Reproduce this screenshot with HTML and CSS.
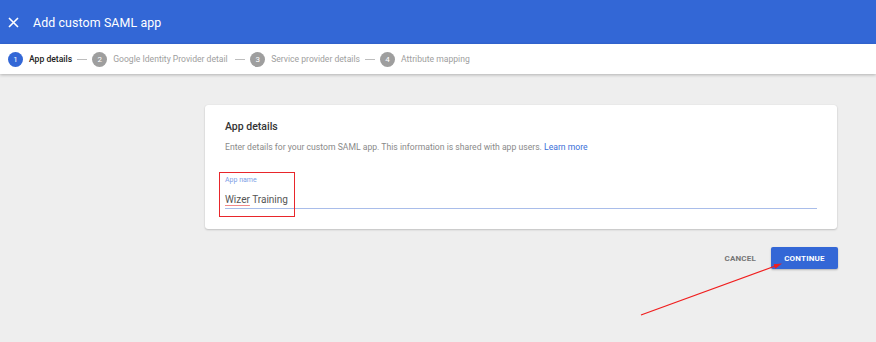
FILE: index.html
```html
<!DOCTYPE html>
<html lang="en">
<head>
  <meta charset="UTF-8">
  <title>Add custom SAML app</title>
  <link rel="stylesheet" href="styles.css">
</head>
<body>
  <header class="appbar">
    <button class="close-btn" aria-label="Close">
      <svg width="11" height="11" viewBox="0 0 11 11"><path d="M1 1L10 10M10 1L1 10" stroke="#fff" stroke-width="1.6" fill="none"/></svg>
    </button>
    <h1 class="appbar-title">Add custom SAML app</h1>
  </header>

  <nav class="stepper">
    <div class="step active"><span class="step-num">1</span><span class="step-label">App details</span></div>
    <span class="step-line"></span>
    <div class="step"><span class="step-num">2</span><span class="step-label wide">Google Identity Provider detail</span></div>
    <span class="step-line"></span>
    <div class="step"><span class="step-num">3</span><span class="step-label">Service provider details</span></div>
    <span class="step-line"></span>
    <div class="step"><span class="step-num">4</span><span class="step-label">Attribute mapping</span></div>
  </nav>

  <main class="content">
    <section class="card">
      <h2 class="card-title">App details</h2>
      <p class="card-desc">Enter details for your custom SAML app. This information is shared with app users. <a href="#">Learn more</a></p>
      <div class="field">
        <label class="field-label">App name</label>
        <div class="field-input"><span class="typo">Wizer</span> Training</div>
        <span class="highlight-box"></span>
      </div>
    </section>
    <div class="actions">
      <button class="btn-text">CANCEL</button>
      <button class="btn-primary">CONTINUE</button>
    </div>
  </main>

  <svg class="annot-arrow" width="876" height="342" viewBox="0 0 876 342">
    <line x1="641" y1="315" x2="778" y2="265" stroke="#f01e1e" stroke-width="1.3"/>
    <path d="M782 263.5L773.5 264.2L775.3 268.8Z" fill="#f01e1e"/>
  </svg>
</body>
</html>
```

FILE: styles.css
```css
body {
  margin: 0;
  background: #eeeeee;
  font-family: Roboto, "Liberation Sans", sans-serif;
  color: #212121;
  width: 876px;
  height: 342px;
  overflow: hidden;
  position: relative;
}

.appbar {
  height: 44px;
  background: #3367d6;
  display: flex;
  align-items: center;
  padding-left: 8px;
}

.close-btn {
  background: none;
  border: none;
  padding: 0;
  width: 11px;
  height: 11px;
  display: flex;
  margin-right: 14px;
  margin-top: 1px;
}

.appbar-title {
  margin: 0;
  font-size: 12.4px;
  font-weight: 400;
  color: #fff;
  letter-spacing: 0.1px;
}

.stepper {
  height: 30px;
  background: #fff;
  display: flex;
  align-items: center;
  padding-left: 8px;
  box-shadow: 0 1px 3px rgba(0,0,0,0.25);
  position: relative;
  z-index: 1;
}

.step {
  display: flex;
  align-items: center;
  gap: 6px;
}

.step-num {
  width: 15px;
  height: 15px;
  border-radius: 50%;
  background: #9e9e9e;
  color: #fff;
  font-size: 8px;
  display: flex;
  align-items: center;
  justify-content: center;
}

.step-label {
  font-size: 8.6px;
  color: #9e9e9e;
  white-space: nowrap;
}

.step-label.wide { min-width: 117px; }

.step.active .step-num { background: #3367d6; }
.step.active .step-label { color: #212121; font-weight: 500; }

.step-line {
  width: 10px;
  height: 1px;
  background: #bdbdbd;
  margin: 0 5px;
}

.content {
  padding: 31px 0 0 205px;
  width: 632px;
}

.card {
  background: #fff;
  border-radius: 3px;
  box-shadow: 0 1px 2px rgba(0,0,0,0.18), 0 0 1px rgba(0,0,0,0.12);
  height: 124px;
  padding: 15px 20px 0;
  box-sizing: border-box;
}

.card-title {
  margin: 0;
  font-size: 10.5px;
  font-weight: 500;
  color: #333;
  line-height: 14px;
}

.card-desc {
  margin: 7px 0 0;
  font-size: 8.65px;
  color: #8a8a8a;
  line-height: 12px;
}

.card-desc a {
  color: #3b6fd8;
  text-decoration: none;
}

.field {
  position: relative;
  margin-top: 23px;
  border-bottom: 1.5px solid #a9bdea;
  padding-bottom: 1px;
}

.field-label {
  display: block;
  font-size: 7px;
  color: #7ea0e6;
  line-height: 9px;
}

.field-input {
  font-size: 10px;
  color: #555;
  line-height: 14px;
  margin-top: 8px;
}

.typo {
  text-decoration: underline solid #f08a8a;
  text-decoration-thickness: 1px;
  text-underline-offset: 2px;
}

.highlight-box {
  position: absolute;
  left: -6px;
  top: -4px;
  width: 74px;
  height: 43px;
  border: 1.5px solid #e8262b;
}

.actions {
  display: flex;
  justify-content: flex-end;
  align-items: center;
  margin-top: 18px;
  margin-right: -1px;
  gap: 15px;
}

.btn-text {
  background: none;
  border: none;
  font-family: inherit;
  font-size: 8px;
  font-weight: 700;
  color: #757575;
  padding: 0;
  letter-spacing: 0.2px;
}

.btn-primary {
  background: #3367d6;
  border: none;
  border-radius: 2px;
  color: #fff;
  font-family: inherit;
  font-size: 8px;
  font-weight: 700;
  letter-spacing: 0.2px;
  width: 67px;
  height: 22px;
  box-shadow: 0 1px 2px rgba(0,0,0,0.25);
}

.annot-arrow {
  position: absolute;
  left: 0;
  top: 0;
  pointer-events: none;
}
```
